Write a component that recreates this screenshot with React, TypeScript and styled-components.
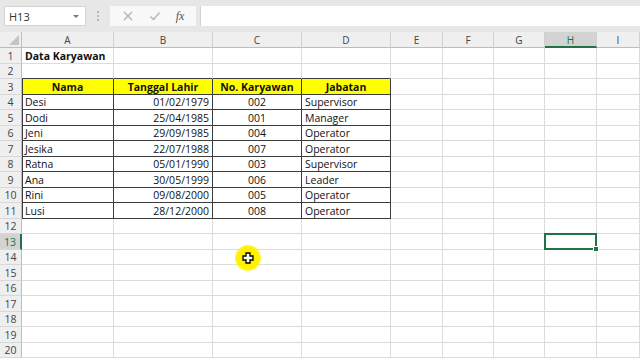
import React from 'react'
import styled, { createGlobalStyle } from 'styled-components'

const GlobalStyle = createGlobalStyle`
  html, body {
    margin: 0;
    padding: 0;
    background: #ffffff;
    overflow: hidden;
  }
  body {
    font-family: 'Open Sans', 'Liberation Sans', sans-serif;
  }
`

const Page = styled.div`
  width: 640px;
  height: 360px;
  overflow: hidden;
  position: relative;
  background: #fff;
`

const Toolbar = styled.div`
  height: 32px;
  background: #e7e7e7;
  display: flex;
  align-items: center;
  padding: 0 0 0 4px;
  box-sizing: border-box;
`

const NameBox = styled.div`
  width: 82px;
  height: 20px;
  background: #fff;
  border: 1px solid #d4d4d4;
  box-sizing: border-box;
  display: flex;
  align-items: center;
  justify-content: space-between;
  padding: 0 6px 0 4px;
  font-size: 11px;
  color: #333;
`

const Caret = styled.span`
  width: 0;
  height: 0;
  border-left: 3px solid transparent;
  border-right: 3px solid transparent;
  border-top: 3px solid #777;
`

const Grip = styled.div`
  width: 24px;
  display: flex;
  flex-direction: column;
  align-items: center;
  gap: 2px;
  span {
    width: 2px;
    height: 2px;
    background: #a9a9a9;
    border-radius: 1px;
  }
`

const FxGroup = styled.div`
  width: 86px;
  height: 20px;
  background: #f8f8f8;
  display: flex;
  align-items: center;
  justify-content: space-around;
  padding: 0 4px;
  box-sizing: border-box;
  margin-right: 4px;
`

const FxLabel = styled.span`
  font-family: 'Liberation Serif', serif;
  font-style: italic;
  font-size: 12px;
  color: #555;
`

const FormulaInput = styled.div`
  flex: 1;
  height: 20px;
  background: #fff;
  border-left: 1px solid #d4d4d4;
`

const Sheet = styled.div`
  display: grid;
  grid-template-columns: 22px 92px 99px 89px 89px 52px 51px 51px 52px 1fr;
  grid-template-rows: 16px;
  grid-auto-rows: 15.5px;
  font-family: 'Open Sans', 'Liberation Sans', sans-serif;
`

const Corner = styled.div`
  background: #efefef;
  border-right: 1px solid #bdbdbd;
  border-bottom: 1px solid #bdbdbd;
  position: relative;
  &::after {
    content: '';
    position: absolute;
    right: 2px;
    bottom: 2px;
    border-left: 10px solid transparent;
    border-bottom: 10px solid #c4c4c4;
  }
`

const ColHead = styled.div<{ $active?: boolean }>`
  background: ${p => (p.$active ? '#d3d3d3' : '#efefef')};
  border-right: 1px solid #d0d0d0;
  border-bottom: ${p => (p.$active ? '2px solid #217346' : '1px solid #bdbdbd')};
  box-sizing: border-box;
  display: flex;
  align-items: center;
  justify-content: center;
  padding-top: 1px;
  font-size: 10px;
  color: ${p => (p.$active ? '#217346' : '#444')};
`

const RowHead = styled.div<{ $active?: boolean }>`
  background: ${p => (p.$active ? '#d3d3d3' : '#efefef')};
  border-right: ${p => (p.$active ? '2px solid #217346' : '1px solid #bdbdbd')};
  border-bottom: 1px solid #d8d8d8;
  box-sizing: border-box;
  display: flex;
  align-items: center;
  justify-content: center;
  padding-top: 1px;
  font-size: 10.5px;
  color: ${p => (p.$active ? '#217346' : '#444')};
`

const Cell = styled.div<{
  $align?: 'left' | 'center' | 'right'
  $bold?: boolean
  $fill?: string
  $boxed?: boolean
  $edgeLeft?: boolean
  $darkBottom?: boolean
  $selected?: boolean
}>`
  position: relative;
  box-sizing: border-box;
  background: ${p => p.$fill || '#fff'};
  border-right: 1px solid ${p => (p.$boxed ? '#3c3c3c' : '#dcdcdc')};
  border-bottom: 1px solid ${p => (p.$boxed || p.$darkBottom ? '#3c3c3c' : '#dcdcdc')};
  box-shadow: ${p => (p.$edgeLeft ? 'inset 1px 0 0 #3c3c3c' : 'none')};
  display: flex;
  align-items: center;
  justify-content: ${p =>
    p.$align === 'center' ? 'center' : p.$align === 'right' ? 'flex-end' : 'flex-start'};
  padding: 1px 3px 0;
  font-size: 10.5px;
  font-weight: ${p => (p.$bold ? 700 : 400)};
  color: #111;
  white-space: nowrap;
  overflow: visible;
  ${p =>
    p.$selected &&
    `
    &::after {
      content: '';
      position: absolute;
      left: -1px;
      top: -1px;
      right: -1px;
      bottom: -1px;
      border: 2px solid #217346;
      pointer-events: none;
    }
    &::before {
      content: '';
      position: absolute;
      right: -3px;
      bottom: -3px;
      width: 4px;
      height: 4px;
      background: #217346;
      border: 1px solid #fff;
      z-index: 2;
    }
  `}
`

const Pointer = styled.div`
  position: absolute;
  left: 235px;
  top: 245px;
  width: 26px;
  height: 26px;
  border-radius: 50%;
  background: radial-gradient(circle, #fff200 55%, rgba(255, 242, 0, 0.6) 80%, rgba(255, 242, 0, 0) 100%);
  display: flex;
  align-items: center;
  justify-content: center;
`

const columns = ['A', 'B', 'C', 'D', 'E', 'F', 'G', 'H', 'I']

type Employee = [string, string, string, string]

const employees: Employee[] = [
  ['Desi', '01/02/1979', '002', 'Supervisor'],
  ['Dodi', '25/04/1985', '001', 'Manager'],
  ['Jeni', '29/09/1985', '004', 'Operator'],
  ['Jesika', '22/07/1988', '007', 'Operator'],
  ['Ratna', '05/01/1990', '003', 'Supervisor'],
  ['Ana', '30/05/1999', '006', 'Leader'],
  ['Rini', '09/08/2000', '005', 'Operator'],
  ['Lusi', '28/12/2000', '008', 'Operator'],
]

const headers = ['Nama', 'Tanggal Lahir', 'No. Karyawan', 'Jabatan']
const dataAlign: ('left' | 'right' | 'center')[] = ['left', 'right', 'center', 'left']

const TOTAL_ROWS = 20

const renderRow = (r: number) => {
  const cells: React.ReactNode[] = []
  cells.push(
    <RowHead key={`rh${r}`} $active={r === 13}>
      {r}
    </RowHead>
  )
  columns.forEach((col, c) => {
    const key = `${col}${r}`
    const inTable = c < 4 && r >= 3 && r <= 11
    if (r === 1 && c === 0) {
      cells.push(
        <Cell key={key} $bold>
          Data Karyawan
        </Cell>
      )
    } else if (r === 3 && c < 4) {
      cells.push(
        <Cell key={key} $boxed $edgeLeft={c === 0} $fill="#ffff00" $bold $align="center">
          {headers[c]}
        </Cell>
      )
    } else if (inTable) {
      const emp = employees[r - 4]
      cells.push(
        <Cell key={key} $boxed $edgeLeft={c === 0} $align={dataAlign[c]}>
          {emp[c]}
        </Cell>
      )
    } else {
      cells.push(
        <Cell key={key} $darkBottom={r === 2 && c < 4} $selected={r === 13 && col === 'H'} />
      )
    }
  })
  return cells
}

const App = () => {
  return (
    <Page>
      <GlobalStyle />
      <Toolbar>
        <NameBox>
          H13
          <Caret />
        </NameBox>
        <Grip>
          <span />
          <span />
          <span />
        </Grip>
        <FxGroup>
          <svg width="12" height="12" viewBox="0 0 12 12">
            <path d="M2 2 L10 10 M10 2 L2 10" stroke="#b0b0b0" strokeWidth="1.2" fill="none" />
          </svg>
          <svg width="12" height="12" viewBox="0 0 12 12">
            <path d="M1.5 6.5 L4.5 9.5 L10.5 2.5" stroke="#b0b0b0" strokeWidth="1.2" fill="none" />
          </svg>
          <FxLabel>fx</FxLabel>
        </FxGroup>
        <FormulaInput />
      </Toolbar>
      <Sheet>
        <Corner />
        {columns.map(col => (
          <ColHead key={col} $active={col === 'H'}>
            {col}
          </ColHead>
        ))}
        {Array.from({ length: TOTAL_ROWS }, (_, i) => renderRow(i + 1))}
      </Sheet>
      <Pointer>
        <svg width="12" height="12" viewBox="0 0 12 12">
          <path
            d="M4 1 H8 V4 H11 V8 H8 V11 H4 V8 H1 V4 H4 Z"
            fill="#fff"
            stroke="#000"
            strokeWidth="1.3"
          />
        </svg>
      </Pointer>
    </Page>
  )
}

export default App
